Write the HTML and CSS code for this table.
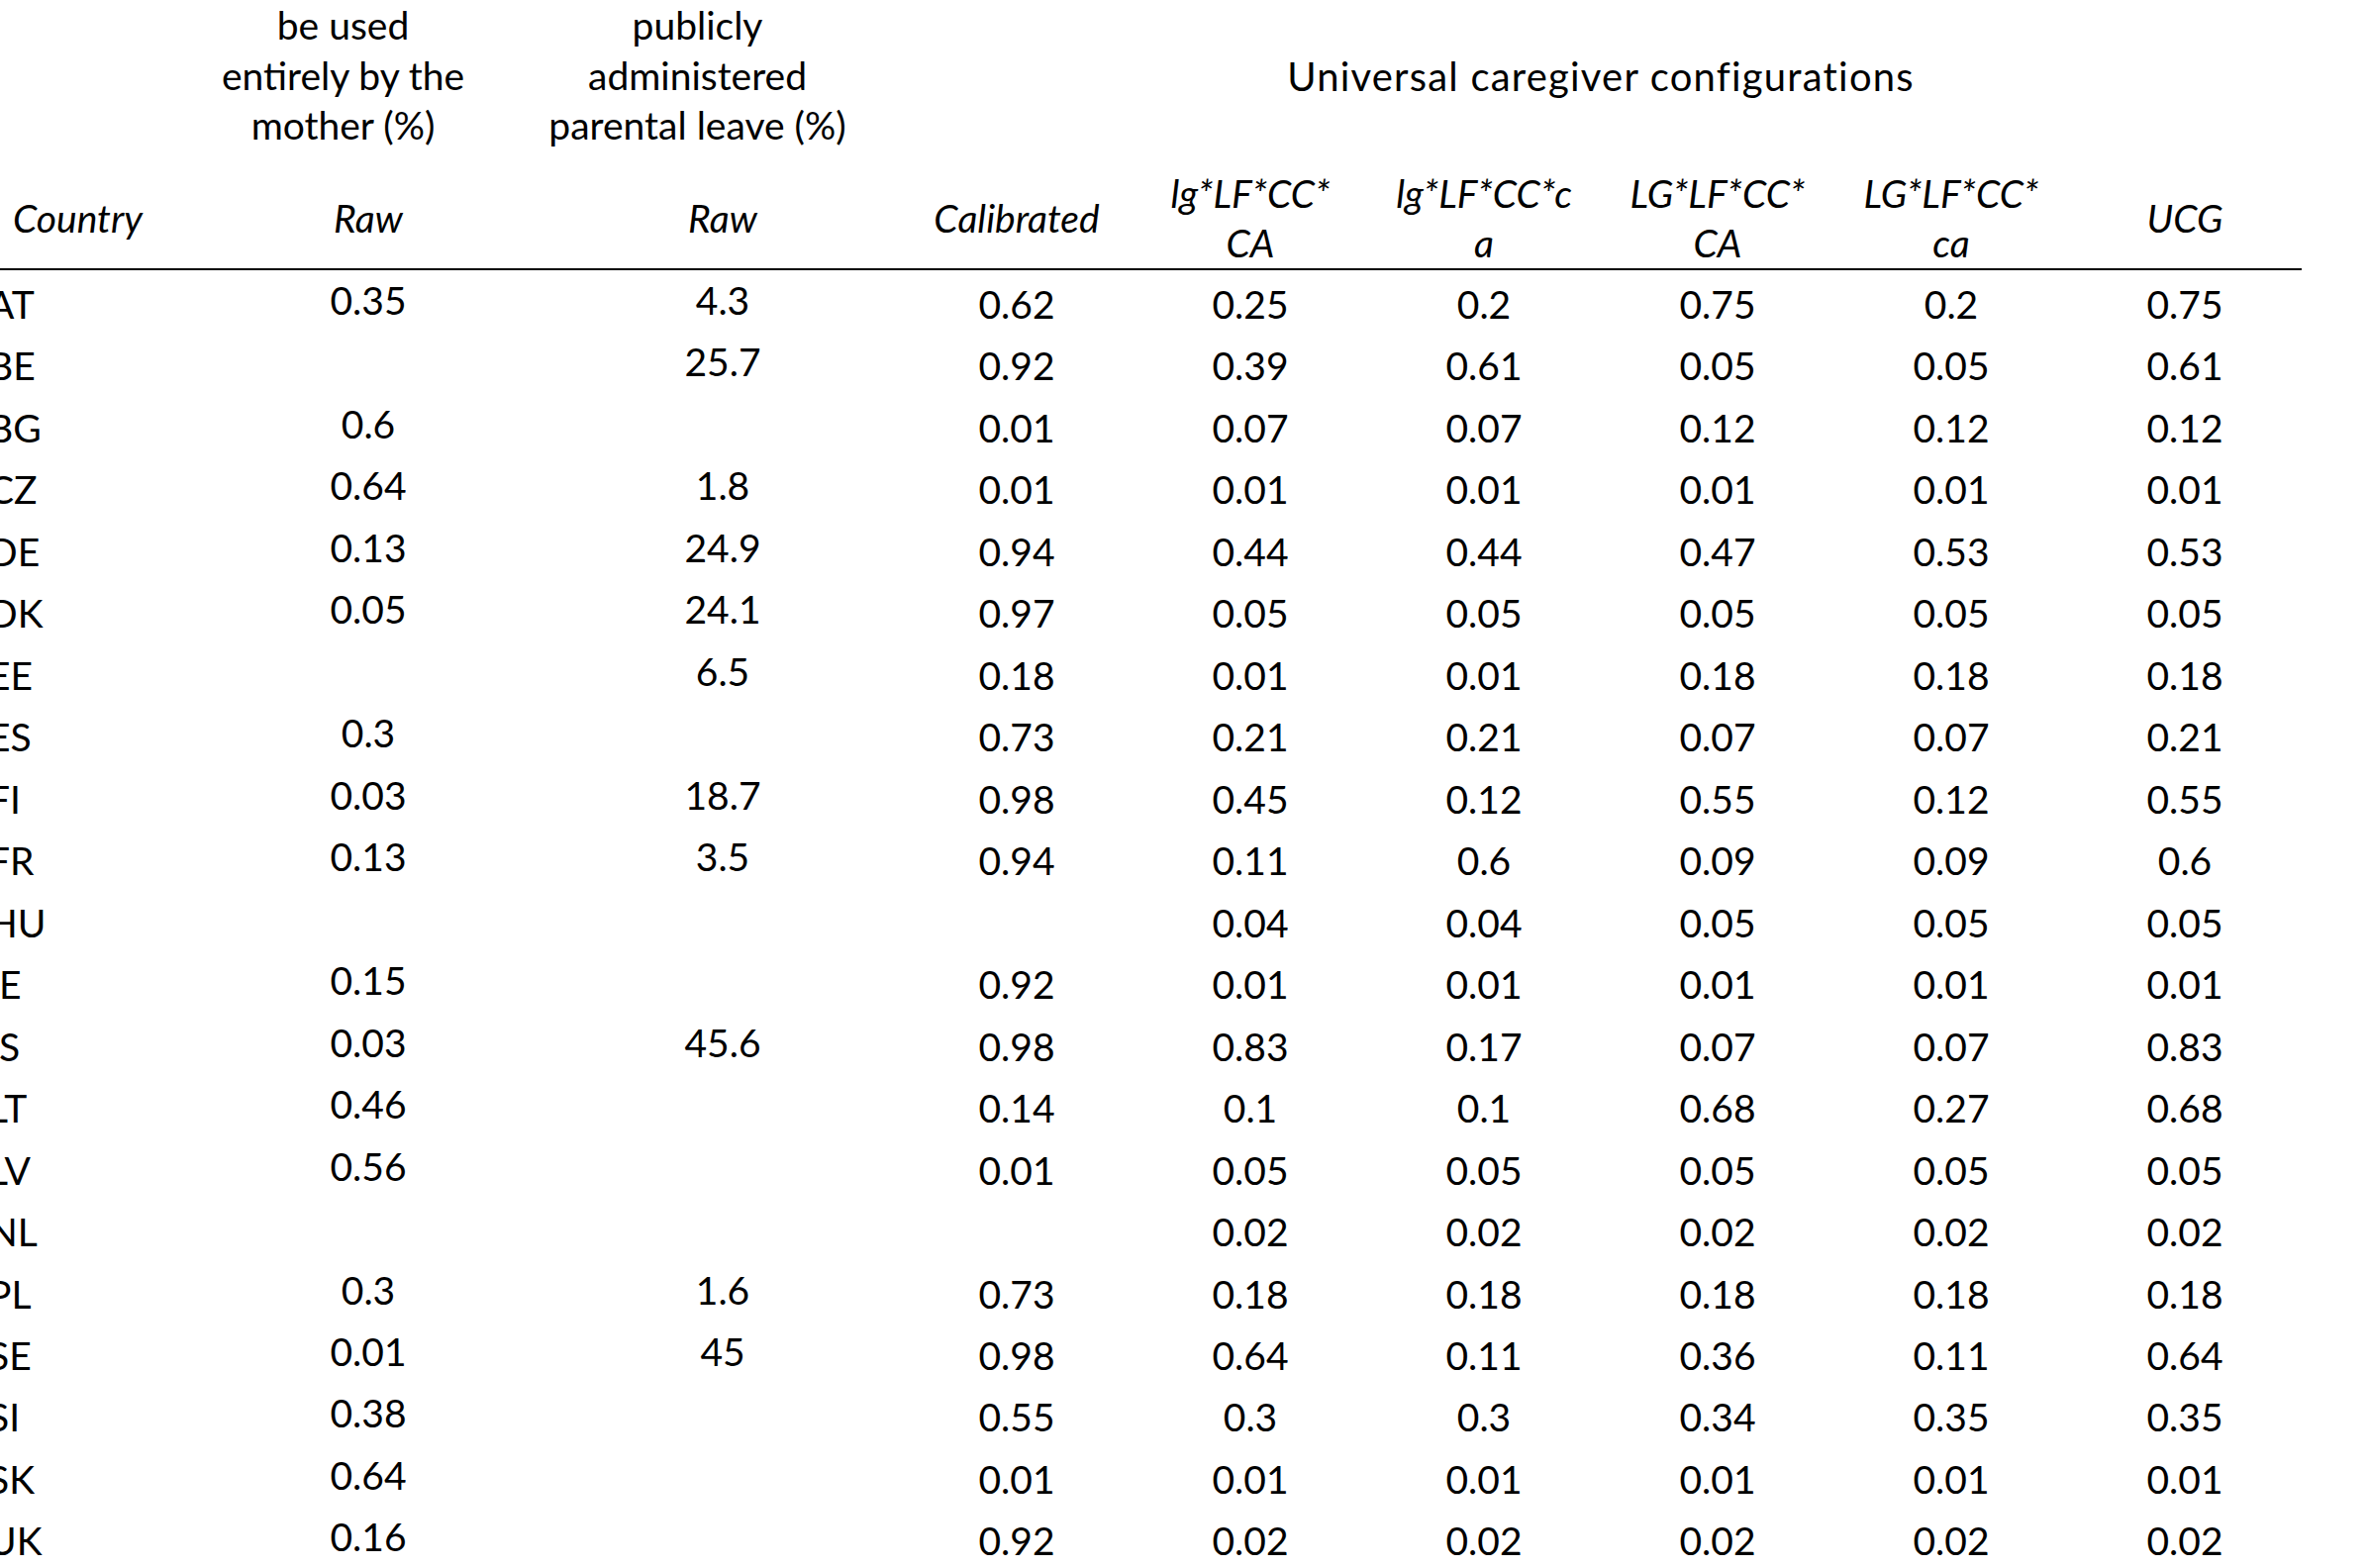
FILE: index.html
```html
<!DOCTYPE html>
<html lang="en">
<head>
<meta charset="utf-8">
<title>Universal caregiver configurations</title>
<link rel="stylesheet" href="styles.css">
</head>
<body>
<div class="sheet">
  <div class="row head-top">
    <div class="cell"></div>
    <div class="cell top-note">be used<br>entirely by the<br>mother (%)</div>
    <div class="cell top-note">publicly<br>administered<br>parental leave (%)</div>
    <div class="cell span-ucg">Universal caregiver configurations</div>
  </div>
  <div class="row head-sub">
    <div class="cell country-h">Country</div>
    <div class="cell">Raw</div>
    <div class="cell">Raw</div>
    <div class="cell">Calibrated</div>
    <div class="cell">lg*LF*CC*<br>CA</div>
    <div class="cell">lg*LF*CC*c<br>a</div>
    <div class="cell">LG*LF*CC*<br>CA</div>
    <div class="cell">LG*LF*CC*<br>ca</div>
    <div class="cell">UCG</div>
  </div>
  <div class="body" id="rows"></div>
</div>
<script src="script.js"></script>
</body>
</html>
```

FILE: script.js
```js
var data = [
  ["AT","0.35","4.3","0.62","0.25","0.2","0.75","0.2","0.75"],
  ["BE","","25.7","0.92","0.39","0.61","0.05","0.05","0.61"],
  ["BG","0.6","","0.01","0.07","0.07","0.12","0.12","0.12"],
  ["CZ","0.64","1.8","0.01","0.01","0.01","0.01","0.01","0.01"],
  ["DE","0.13","24.9","0.94","0.44","0.44","0.47","0.53","0.53"],
  ["DK","0.05","24.1","0.97","0.05","0.05","0.05","0.05","0.05"],
  ["EE","","6.5","0.18","0.01","0.01","0.18","0.18","0.18"],
  ["ES","0.3","","0.73","0.21","0.21","0.07","0.07","0.21"],
  ["FI","0.03","18.7","0.98","0.45","0.12","0.55","0.12","0.55"],
  ["FR","0.13","3.5","0.94","0.11","0.6","0.09","0.09","0.6"],
  ["HU","","","","0.04","0.04","0.05","0.05","0.05"],
  ["IE","0.15","","0.92","0.01","0.01","0.01","0.01","0.01"],
  ["IS","0.03","45.6","0.98","0.83","0.17","0.07","0.07","0.83"],
  ["LT","0.46","","0.14","0.1","0.1","0.68","0.27","0.68"],
  ["LV","0.56","","0.01","0.05","0.05","0.05","0.05","0.05"],
  ["NL","","","","0.02","0.02","0.02","0.02","0.02"],
  ["PL","0.3","1.6","0.73","0.18","0.18","0.18","0.18","0.18"],
  ["SE","0.01","45","0.98","0.64","0.11","0.36","0.11","0.64"],
  ["SI","0.38","","0.55","0.3","0.3","0.34","0.35","0.35"],
  ["SK","0.64","","0.01","0.01","0.01","0.01","0.01","0.01"],
  ["UK","0.16","","0.92","0.02","0.02","0.02","0.02","0.02"]
];
var host = document.getElementById("rows");
data.forEach(function (r) {
  var row = document.createElement("div");
  row.className = "row data";
  r.forEach(function (v, i) {
    var c = document.createElement("div");
    c.className = "cell" + (i === 0 ? " code" : (i < 3 ? " raw" : ""));
    c.textContent = v;
    row.appendChild(c);
  });
  host.appendChild(row);
});
```

FILE: styles.css
```css
html, body {
  margin: 0;
  padding: 0;
  background: #ffffff;
}

body {
  width: 2392px;
  height: 1584px;
  overflow: hidden;
  font-family: Lato, "Open Sans", sans-serif;
  font-size: 39px;
  color: #000000;
}

.sheet {
  width: 2392px;
}

.row {
  display: grid;
  grid-template-columns: 193px 358px 358px repeat(6, 236px);
  width: 2325px;
}

.cell {
  text-align: center;
  white-space: nowrap;
}

.head-top {
  margin-top: 0;
  line-height: 50.5px;
}

.top-note {
  padding-right: 51px;
}

.span-ucg {
  grid-column: 4 / span 6;
  align-self: center;
  font-size: 40px;
  letter-spacing: 1.2px;
  padding-top: 3px;
}

.head-sub {
  font-style: italic;
  line-height: 50.5px;
  padding-top: 20px;
  padding-bottom: 0;
  border-bottom: 2px solid #000000;
  align-items: center;
}

.country-h {
  text-align: left;
  padding-left: 13px;
}

.head-sub .cell {
  margin-top: -2px;
}

.body {
  padding-top: 3.5px;
}

.data {
  height: 62.47px;
  line-height: 62.47px;
  align-items: start;
}

.code {
  text-align: left;
  text-indent: -12px;
}

.raw {
  line-height: 54.47px;
}
```
